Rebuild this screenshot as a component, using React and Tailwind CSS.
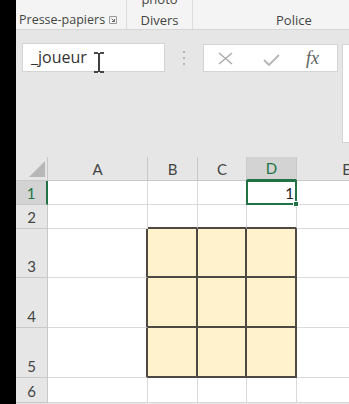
import React from 'react';

const cols = ['A', 'B', 'C', 'D', 'E'];
const rows = [1, 2, 3, 4, 5, 6];

const Launcher = () => (
    <svg width="8" height="8" viewBox="0 0 8 8" className="mb-[5px] shrink-0">
        <path d="M0.5 0.5h7v7h-7z" fill="none" stroke="#9a9a9a" strokeWidth="1" />
        <path d="M2.5 2.5l3 3M5.5 3v2.5H3" fill="none" stroke="#707070" strokeWidth="1" />
    </svg>
);

const IBeam = () => (
    <svg width="12" height="21" viewBox="0 0 12 21" className="ml-[6px] mt-[8px] shrink-0">
        <path d="M1 1h4M7 1h4M6 1v19M1 20h4M7 20h4" fill="none" stroke="#111" strokeWidth="1.6" />
    </svg>
);

// cell classes per position; yellow block is B3:D5
const cellClass = (r, c) => {
    const inBlock = r >= 3 && r <= 5 && c >= 1 && c <= 3;
    const leftOfBlock = r >= 3 && r <= 5 && c === 0;
    const aboveBlock = r === 2 && c >= 1 && c <= 3;
    let cls = 'border-r border-b border-[#dadada] bg-white';
    if (inBlock) {
        cls = 'border-r-2 border-b-2 border-[#4f4943] bg-[#fff2cc]';
    } else if (leftOfBlock) {
        cls = 'border-r-2 border-b border-r-[#4f4943] border-b-[#dadada] bg-white';
    } else if (aboveBlock) {
        cls = 'border-r border-b-2 border-r-[#dadada] border-b-[#4f4943] bg-white';
    }
    return cls;
};

export default function App() {
    return (
        <div className="flex h-[404px] w-[349px] overflow-hidden bg-[#e6e6e6] font-['Open_Sans',sans-serif]">
            <div className="w-[16px] shrink-0 bg-black" />
            <div className="flex min-w-0 flex-1 flex-col">
                {/* ribbon */}
                <div className="flex h-[30px] shrink-0 overflow-hidden border-b border-[#d6d6d6] bg-[#f4f4f4] text-[12.5px] leading-[18px] text-[#444]">
                    <div className="flex w-[111px] shrink-0 items-end justify-between whitespace-nowrap border-r border-[#dcdcdc] pl-[3px] pr-[9px]">
                        <span>Presse-papiers</span>
                        <Launcher />
                    </div>
                    <div className="flex w-[66px] shrink-0 flex-col items-center justify-end border-r border-[#dcdcdc] text-[13px] leading-[20px]">
                        <span className="mb-[2px]">photo</span>
                        <span className="leading-[18px]">Divers</span>
                    </div>
                    <div className="flex flex-1 items-end pl-[83px] text-[13px]">
                        <span>Police</span>
                    </div>
                </div>

                {/* formula bar */}
                <div className="flex h-[127px] shrink-0 items-start pt-[13px]">
                    <div className="ml-[6px] flex h-[29px] w-[143px] shrink-0 border border-[#d4d4d4] bg-white pl-[8px]">
                        <span className="mt-[1px] text-[16px] leading-[24px] text-[#333]">_joueur</span>
                        <IBeam />
                    </div>
                    <div className="flex h-[29px] w-[38px] shrink-0 flex-col items-center justify-center gap-[4px]">
                        <span className="h-[2px] w-[2px] bg-[#b5b5b5]" />
                        <span className="h-[2px] w-[2px] bg-[#b5b5b5]" />
                        <span className="h-[2px] w-[2px] bg-[#b5b5b5]" />
                    </div>
                    <div className="mt-[1px] flex h-[28px] w-[135px] shrink-0 items-center border border-[#d4d4d4] bg-white">
                        <svg width="15" height="13" viewBox="0 0 15 13" className="ml-[14px]">
                            <path d="M1 1l13 11M14 1L1 12" stroke="#ababab" strokeWidth="1.5" fill="none" />
                        </svg>
                        <svg width="17" height="12" viewBox="0 0 17 12" className="ml-[30px] mt-[3px]">
                            <path d="M1 6l5 5L16 1" stroke="#b5b5b5" strokeWidth="1.8" fill="none" />
                        </svg>
                        <span className="ml-[26px] font-['Liberation_Serif',serif] text-[18px] italic leading-none text-[#5e5e5e]">
                            fx
                        </span>
                    </div>
                    <div className="ml-[4px] mt-[1px] h-[99px] flex-1 border-l border-t border-b border-[#d4d4d4] bg-white" />
                </div>

                {/* grid */}
                <div className="grid grid-cols-[32px_100px_50px_49px_50px_100px] grid-rows-[24px_24px_24px_49px_50px_50px_25px] font-['Lato',sans-serif] text-[15px] text-[#333]">
                    <div className="relative border-r border-b border-[#c8c8c8] bg-[#e6e6e6]">
                        <svg width="18" height="18" viewBox="0 0 18 18" className="absolute bottom-[2px] right-[1px]">
                            <path d="M17 1V17H1z" fill="#b7b7b7" />
                        </svg>
                    </div>
                    {cols.map((c) =>
                        c === 'D' ? (
                            <div
                                key={c}
                                className="flex items-center justify-center border-r border-b-2 border-r-[#c8c8c8] border-b-[#217346] bg-[#d3d3d3] pt-[1px] text-[#217346]"
                            >
                                {c}
                            </div>
                        ) : (
                            <div
                                key={c}
                                className="flex items-center justify-center border-r border-b border-[#c8c8c8] bg-[#e6e6e6] pt-[1px] text-[#444]"
                            >
                                {c}
                            </div>
                        )
                    )}
                    {rows.map((r) => (
                        <React.Fragment key={r}>
                            {r === 1 ? (
                                <div className="flex items-end justify-center border-r-2 border-b border-r-[#217346] border-b-[#c8c8c8] bg-[#d3d3d3] pb-[2px] leading-[18px] text-[#217346]">
                                    {r}
                                </div>
                            ) : (
                                <div className="flex items-end justify-center border-r border-b border-[#c8c8c8] bg-[#e6e6e6] pb-[2px] leading-[18px] text-[#444]">
                                    {r}
                                </div>
                            )}
                            {cols.map((c, ci) =>
                                r === 1 && c === 'D' ? (
                                    <div
                                        key={c}
                                        className="relative -ml-[1px] -mt-[1px] flex items-end justify-end border-2 border-[#217346] bg-white pb-[1px] pr-[1px] leading-[18px] text-[#222]"
                                    >
                                        1
                                        <span className="absolute -bottom-[4px] -right-[4px] h-[6px] w-[6px] border border-white bg-[#217346]" />
                                    </div>
                                ) : (
                                    <div key={c} className={cellClass(r, ci)} />
                                )
                            )}
                        </React.Fragment>
                    ))}
                </div>
            </div>
        </div>
    );
}
